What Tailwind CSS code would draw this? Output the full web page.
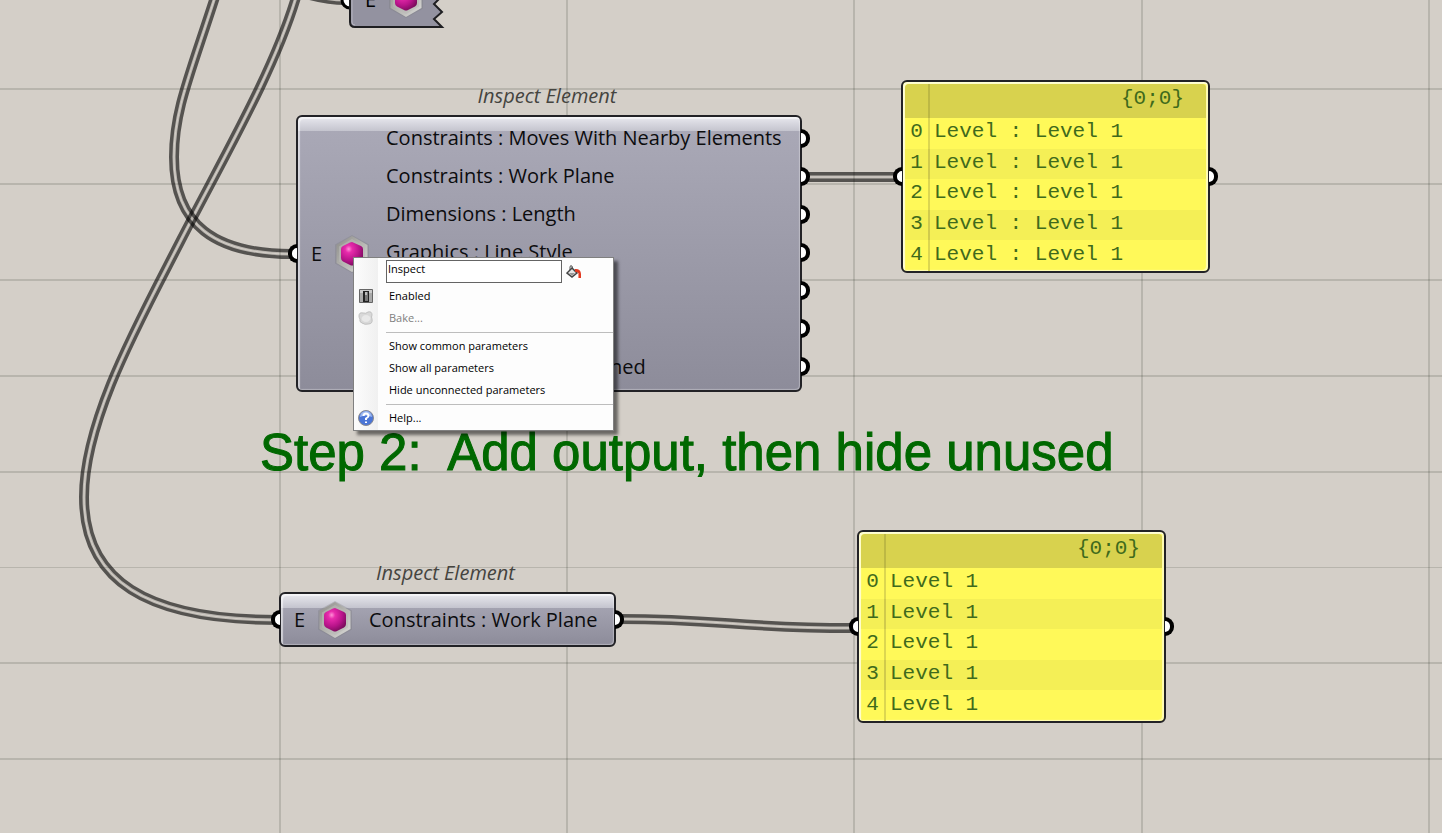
<!DOCTYPE html>
<html lang="en">

<head>
  <meta charset="UTF-8" />
  <meta name="viewport" content="width=device-width, initial-scale=1.0" />
  <title>Inspect Element</title>
  <script src="https://cdn.jsdelivr.net/npm/@tailwindcss/browser@4"></script>
</head>

<body class="bg-[#d4cfc8]">
  <main class="relative min-h-screen w-full overflow-hidden font-['Open_Sans',sans-serif] text-[#0c0c0e]">

    <!-- grid and wires -->
    <svg class="absolute inset-0 h-full w-full" aria-hidden="true">
      <defs>
        <linearGradient id="rim" x1="0" y1="0" x2="1" y2="1">
          <stop offset="0" stop-color="#8b8b87" />
          <stop offset="0.5" stop-color="#b4b4b0" />
          <stop offset="1" stop-color="#dcdcda" />
        </linearGradient>
        <radialGradient id="gem" cx="0.35" cy="0.3" r="0.8">
          <stop offset="0" stop-color="#ff8fd6" />
          <stop offset="0.2" stop-color="#e82bac" />
          <stop offset="0.6" stop-color="#b8148a" />
          <stop offset="1" stop-color="#6d0a52" />
        </radialGradient>
        <symbol id="hex" viewBox="0 0 36 40">
          <path d="M18 1 35 10.500V29.500L18 39 1 29.500V10.500Z" fill="#77767c" opacity=".3" />
          <path d="M18 2 33.500 11V29L18 38 2.500 29V11Z" fill="url(#rim)" />
          <path d="M18 5 31 12.500V27.500L18 35 5 27.500V12.500Z" fill="#b9b9b5" opacity=".6" />
          <path d="M18 8 27 12Q29 13 29 15V24Q29 26 27 27.500L20 31Q18 32 16 31L9 27.500Q7 26 7 24V15Q7 13 9 12L16 8.500Q18 7.500 20 8.500Z" fill="url(#gem)" />
        </symbol>
        <path id="wire-a" d="M216-6C190 75 174 110 174 157C174 225 215 254 292 254" />
        <path id="wire-b" d="M297-6C275 70 222 160 181 240C138 324 84 420 84 497C84 580 145 620 278 620" />
        <path id="wire-c" d="M300-8C318-2 330 0 346 0" />
        <path id="wire-d" d="M620 619C720 619 740 628 852 628" />
        <path id="wire-e" d="M806 177H898" />
        <mask id="mask-a" maskUnits="userSpaceOnUse" x="0" y="-20" width="2000" height="1000">
          <rect y="-20" width="2000" height="1000" fill="#fff" />
          <use href="#wire-a" fill="none" stroke="#333" stroke-width="3" />
          <use href="#wire-a" fill="none" stroke="#000" stroke-width="1" />
        </mask>
        <mask id="mask-b" maskUnits="userSpaceOnUse" x="0" y="-20" width="2000" height="1000">
          <rect y="-20" width="2000" height="1000" fill="#fff" />
          <use href="#wire-b" fill="none" stroke="#333" stroke-width="3" />
          <use href="#wire-b" fill="none" stroke="#000" stroke-width="1" />
        </mask>
        <mask id="mask-c" maskUnits="userSpaceOnUse" x="0" y="-20" width="2000" height="1000">
          <rect y="-20" width="2000" height="1000" fill="#fff" />
          <g fill="none" stroke="#333" stroke-width="3">
            <use href="#wire-c" />
            <use href="#wire-d" />
            <use href="#wire-e" />
          </g>
          <g fill="none" stroke="#000" stroke-width="1">
            <use href="#wire-c" />
            <use href="#wire-d" />
            <use href="#wire-e" />
          </g>
        </mask>
      </defs>

      <g stroke="#1e2314" stroke-opacity=".15" stroke-width="2">
        <path d="M280 0V2000M567 0V2000M854 0V2000M1142 0V2000M1429 0V2000M1716 0V2000" />
        <path d="M0 89H3000M0 184H3000M0 280H3000M0 376H3000M0 472H3000M0 663H3000M0 759H3000M0 855H3000" />
        <path d="M0 567.500H3000" stroke-width="1" />
      </g>

      <g fill="none" stroke="#000" stroke-opacity=".6" stroke-width="10">
        <g mask="url(#mask-a)"><use href="#wire-a" /></g>
        <g mask="url(#mask-b)"><use href="#wire-b" /></g>
        <g mask="url(#mask-c)">
          <use href="#wire-c" />
          <use href="#wire-d" />
          <use href="#wire-e" />
        </g>
      </g>

      <!-- component cut off by the top edge -->
      <circle cx="350" cy="0" r="8" fill="#fff" stroke="#000" stroke-width="3" />
      <path d="M350-20V22Q350 27 355 27H442L434 19 442 12 434 4 442-4V-20Z" fill="#9392a0" stroke="#1f1f22" stroke-width="2" />
      <path d="M352-20V22Q352 25 355 25" fill="none" stroke="#b5b4c0" stroke-width="1" />
      <use href="#hex" x="388" y="-21" width="36" height="40" />
      <text x="365" y="7" font-size="20">E</text>
    </svg>

    <!-- Inspect Element, all parameters -->
    <section class="absolute left-[296px] top-[82px] w-[506px]">
      <h2 class="h-[33px] pr-1 text-center text-[20px] leading-[28px] italic text-[#45443f]">Inspect Element</h2>
      <div class="relative flex h-[277px] items-center rounded-md border-2 border-[#222226] bg-[linear-gradient(#e8e8ee_0px,#c4c4ce_14px,#a9a8b6_14px,#8d8c9a_100%)] pl-[13px] text-[20px] shadow-[inset_2px_2px_1px_#ffffff90,inset_-1px_-1px_1px_#ffffff50]">
        <span class="absolute -left-[10px] h-[19px] w-[9px] rounded-l-full border-[4px] border-r-0 border-black bg-white"></span>
        <span class="w-[23px]">E</span>
        <svg class="h-10 w-9" aria-hidden="true"><use href="#hex" /></svg>
        <ul class="ml-4 flex h-full flex-1 flex-col pt-[2px] pb-1">
          <li class="relative flex flex-1 items-center">Constraints : Moves With Nearby Elements<span class="absolute -right-[10px] h-[19px] w-[9px] rounded-r-full border-[4px] border-l-0 border-black bg-white"></span></li>
          <li class="relative flex flex-1 items-center">Constraints : Work Plane<span class="absolute -right-[10px] h-[19px] w-[9px] rounded-r-full border-[4px] border-l-0 border-black bg-white"></span></li>
          <li class="relative flex flex-1 items-center">Dimensions : Length<span class="absolute -right-[10px] h-[19px] w-[9px] rounded-r-full border-[4px] border-l-0 border-black bg-white"></span></li>
          <li class="relative flex flex-1 items-center">Graphics : Line Style<span class="absolute -right-[10px] h-[19px] w-[9px] rounded-r-full border-[4px] border-l-0 border-black bg-white"></span></li>
          <li class="relative flex flex-1 items-center"><span class="absolute -right-[10px] h-[19px] w-[9px] rounded-r-full border-[4px] border-l-0 border-black bg-white"></span></li>
          <li class="relative flex flex-1 items-center"><span class="absolute -right-[10px] h-[19px] w-[9px] rounded-r-full border-[4px] border-l-0 border-black bg-white"></span></li>
          <li class="relative flex flex-1 items-center pl-56">ned<span class="absolute -right-[10px] h-[19px] w-[9px] rounded-r-full border-[4px] border-l-0 border-black bg-white"></span></li>
        </ul>
      </div>
    </section>

    <!-- Inspect Element, work plane only -->
    <section class="absolute left-[279px] top-[559px] w-[337px]">
      <h2 class="h-[33px] pr-1 text-center text-[20px] leading-[28px] italic text-[#45443f]">Inspect Element</h2>
      <div class="relative flex h-[55px] items-center rounded-md border-2 border-[#222226] bg-[linear-gradient(#e8e8ee_0px,#c4c4ce_14px,#a3a2b0_14px,#8d8c9a_100%)] pl-[13px] text-[20px] shadow-[inset_2px_2px_1px_#ffffff90,inset_-1px_-1px_1px_#ffffff50]">
        <span class="absolute -left-[10px] h-[19px] w-[9px] rounded-l-full border-[4px] border-r-0 border-black bg-white"></span>
        <span class="w-[23px]">E</span>
        <svg class="h-10 w-9" aria-hidden="true"><use href="#hex" /></svg>
        <span class="ml-4">Constraints : Work Plane</span>
        <span class="absolute -right-[10px] h-[19px] w-[9px] rounded-r-full border-[4px] border-l-0 border-black bg-white"></span>
      </div>
    </section>

    <!-- panels -->
    <section class="absolute left-[901px] top-[80px] flex h-[193px] w-[309px] items-center rounded-md border-2 border-[#222226] bg-[#fff959] shadow-[inset_2px_2px_1px_#ffffffc0,inset_-2px_-1px_1px_#ffffff90]">
      <span class="absolute -left-[10px] h-[19px] w-[9px] rounded-l-full border-[4px] border-r-0 border-black bg-white"></span>
      <div class="h-full w-full p-[2px] pb-0">
        <table class="h-full w-full border-collapse overflow-hidden rounded-t-sm font-['Liberation_Mono',monospace] text-[21px] leading-[24px] text-[#3f6a1c]">
          <thead class="bg-[#d8d24e]">
            <tr class="h-[34px]">
              <th class="w-[24px] border-r-2 border-[#bdb844]"></th>
              <th class="pr-[22px] pb-1 text-right font-normal">{0;0}</th>
            </tr>
          </thead>
          <tbody>
            <tr><td class="border-r-2 border-[#dcd650] pb-[2px] text-center">0</td><td class="pb-[2px] pl-1">Level : Level 1</td></tr>
            <tr class="bg-[#f4ef56]"><td class="border-r-2 border-[#d0ca4c] pb-[2px] text-center">1</td><td class="pb-[2px] pl-1">Level : Level 1</td></tr>
            <tr><td class="border-r-2 border-[#dcd650] pb-[2px] text-center">2</td><td class="pb-[2px] pl-1">Level : Level 1</td></tr>
            <tr class="bg-[#f4ef56]"><td class="border-r-2 border-[#d0ca4c] pb-[2px] text-center">3</td><td class="pb-[2px] pl-1">Level : Level 1</td></tr>
            <tr><td class="border-r-2 border-[#dcd650] pb-[2px] text-center">4</td><td class="pb-[2px] pl-1">Level : Level 1</td></tr>
          </tbody>
        </table>
      </div>
      <span class="absolute -right-[10px] h-[19px] w-[9px] rounded-r-full border-[4px] border-l-0 border-black bg-white"></span>
    </section>

    <section class="absolute left-[857px] top-[530px] flex h-[193px] w-[309px] items-center rounded-md border-2 border-[#222226] bg-[#fff959] shadow-[inset_2px_2px_1px_#ffffffc0,inset_-2px_-1px_1px_#ffffff90]">
      <span class="absolute -left-[10px] h-[19px] w-[9px] rounded-l-full border-[4px] border-r-0 border-black bg-white"></span>
      <div class="h-full w-full p-[2px] pb-0">
        <table class="h-full w-full border-collapse overflow-hidden rounded-t-sm font-['Liberation_Mono',monospace] text-[21px] leading-[24px] text-[#3f6a1c]">
          <thead class="bg-[#d8d24e]">
            <tr class="h-[34px]">
              <th class="w-[24px] border-r-2 border-[#bdb844]"></th>
              <th class="pr-[22px] pb-1 text-right font-normal">{0;0}</th>
            </tr>
          </thead>
          <tbody>
            <tr><td class="border-r-2 border-[#dcd650] pb-[2px] text-center">0</td><td class="pb-[2px] pl-1">Level 1</td></tr>
            <tr class="bg-[#f4ef56]"><td class="border-r-2 border-[#d0ca4c] pb-[2px] text-center">1</td><td class="pb-[2px] pl-1">Level 1</td></tr>
            <tr><td class="border-r-2 border-[#dcd650] pb-[2px] text-center">2</td><td class="pb-[2px] pl-1">Level 1</td></tr>
            <tr class="bg-[#f4ef56]"><td class="border-r-2 border-[#d0ca4c] pb-[2px] text-center">3</td><td class="pb-[2px] pl-1">Level 1</td></tr>
            <tr><td class="border-r-2 border-[#dcd650] pb-[2px] text-center">4</td><td class="pb-[2px] pl-1">Level 1</td></tr>
          </tbody>
        </table>
      </div>
      <span class="absolute -right-[10px] h-[19px] w-[9px] rounded-r-full border-[4px] border-l-0 border-black bg-white"></span>
    </section>

    <h1 class="absolute left-[260px] top-[425px] whitespace-pre font-['Liberation_Sans',sans-serif] text-[51px] leading-[56px] text-[#006800] [-webkit-text-stroke:1px_#006800]">Step 2:  Add output, then hide unused</h1>

    <!-- context menu -->
    <div class="absolute left-[353px] top-[257px] w-[261px] border border-[#808080] bg-[linear-gradient(90deg,#fcfcfc_0px,#f0f0f0_24px,#fdfdfd_24px)] pt-[2px] pb-[1px] text-[11px] leading-[22px] text-black shadow-[4px_4px_3px_#00000080]">
      <div class="flex h-[25px] items-start pl-8">
        <input type="text" value="Inspect" aria-label="Name" class="h-[23px] w-[176px] border border-[#646464] bg-white pb-[6px] pl-px font-['Open_Sans',sans-serif] text-[11px] leading-[15px] outline-none" />
        <button type="button" aria-label="Colour" class="ml-1 h-6 w-4">
          <svg class="h-4 w-4" viewBox="0 0 16 16" fill="none">
            <path d="M4 7V3Q4 1 6 2L7 7" stroke="#555" />
            <path d="M6 4 11 9 6 13 1 9Z" fill="#e4e4e4" stroke="#444" stroke-width="1.500" />
            <path d="M3 9 9 9 6 12Z" fill="#999" />
            <path d="M9 6.500Q13.500 6 13.500 10V14" stroke="#e23a22" stroke-width="3" />
            <path d="M12.500 9V14" stroke="#f4907c" />
          </svg>
        </button>
      </div>
      <button type="button" class="flex h-[22px] w-full items-center pl-1">
        <svg class="mr-[15px] h-4 w-4" viewBox="0 0 16 16">
          <path d="M1.500 1.500H14.500V14.500H1.500Z" fill="#a9a9a9" stroke="#666" />
          <path d="M2 2H14V5H2Z" fill="#eee" opacity=".5" />
          <path d="M5 3H11V14H5Z" fill="#222" />
          <path d="M7 4H10V13H7Z" fill="#777" />
          <path d="M7 4H9V7H7Z" fill="#bbb" />
        </svg>
        Enabled
      </button>
      <button type="button" disabled class="flex h-[22px] w-full items-center pl-1 text-[#808080]">
        <svg class="mr-[15px] h-4 w-4" viewBox="0 0 16 16">
          <path d="M1 6Q1 2 5 3 8 4 10 2 14 1 14 5 13 7 14 9 15 14 10 14 7 15 4 13 1 12 2 9 1 8 1 6Z" fill="#d8d8d8" stroke="#c0c0c0" />
          <path d="M5 6Q8 4 11 6T11 11Q8 13 5 11T5 6Z" fill="#e8e8e8" />
        </svg>
        Bake...
      </button>
      <hr class="mt-[3px] mb-[2px] ml-8 border-[#bdbdbd]" />
      <button type="button" class="block h-[22px] w-full pl-[35px] text-left">Show common parameters</button>
      <button type="button" class="block h-[22px] w-full pl-[35px] text-left">Show all parameters</button>
      <button type="button" class="block h-[22px] w-full pl-[35px] text-left">Hide unconnected parameters</button>
      <hr class="mt-[3px] mb-[2px] ml-8 border-[#bdbdbd]" />
      <button type="button" class="flex h-[22px] w-full items-center pl-1">
        <svg class="mr-[15px] h-4 w-4" viewBox="0 0 16 16">
          <circle cx="8" cy="8" r="7.500" fill="#4a75d6" stroke="#8a8a90" />
          <path d="M2 7A6 6 0 0 1 14 7Q8 4 2 7Z" fill="#9db8f0" />
          <path d="M5.500 6Q5.500 3.500 8 3.500T10.500 6Q10.500 7 8 8.500V10M8 11.500V13" fill="none" stroke="#fff" stroke-width="2" />
        </svg>
        Help...
      </button>
    </div>
  </main>
</body>

</html>
